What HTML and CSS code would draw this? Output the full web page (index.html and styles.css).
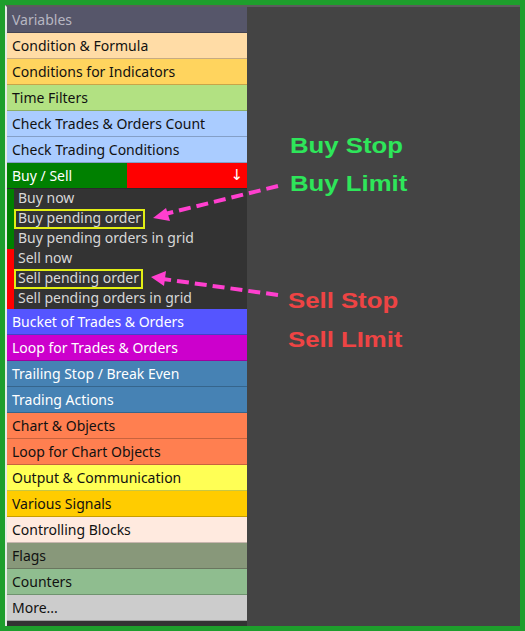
FILE: index.html
```html
<!DOCTYPE html>
<html lang="en">
<head>
  <meta charset="UTF-8">
  <meta name="viewport" content="width=device-width, initial-scale=1.0">
  <title>Blocks</title>
  <link rel="stylesheet" href="styles.css">
</head>
<body>
  <div class="window">
    <div class="panel">
      <div class="row variables">Variables</div>
      <div class="row peach">Condition &amp; Formula</div>
      <div class="row gold">Conditions for Indicators</div>
      <div class="row lime">Time Filters</div>
      <div class="row sky">Check Trades &amp; Orders Count</div>
      <div class="row sky">Check Trading Conditions</div>
      <div class="row buysell">
        <span>Buy / Sell</span>
        <span class="arrow">&#8595;</span>
      </div>
      <div class="submenu">
        <div class="item buy"><span>Buy now</span></div>
        <div class="item buy"><span class="marked">Buy pending order</span></div>
        <div class="item buy"><span>Buy pending orders in grid</span></div>
        <div class="item sell"><span>Sell now</span></div>
        <div class="item sell"><span class="marked">Sell pending order</span></div>
        <div class="item sell"><span>Sell pending orders in grid</span></div>
      </div>
      <div class="row blue">Bucket of Trades &amp; Orders</div>
      <div class="row magenta">Loop for Trades &amp; Orders</div>
      <div class="row steel">Trailing Stop / Break Even</div>
      <div class="row steel">Trading Actions</div>
      <div class="row coral">Chart &amp; Objects</div>
      <div class="row coral">Loop for Chart Objects</div>
      <div class="row yellow">Output &amp; Communication</div>
      <div class="row amber">Various Signals</div>
      <div class="row linen">Controlling Blocks</div>
      <div class="row olive">Flags</div>
      <div class="row sage">Counters</div>
      <div class="row grey">More...</div>
    </div>
  </div>

  <!-- notes drawn over the screenshot -->
  <svg class="overlay" width="525" height="631" viewBox="0 0 525 631">
    <g stroke="#ff3fcf" stroke-width="4" stroke-dasharray="12 6" fill="none">
      <line x1="278" y1="186" x2="165" y2="214"/>
      <line x1="278" y1="295" x2="163" y2="279"/>
    </g>
    <g fill="#ff3fcf">
      <polygon points="153,218 166,208 170,221"/>
      <polygon points="151,277 166,271 164,286"/>
    </g>
  </svg>
  <div class="note green" style="top:135px;left:290px">Buy Stop</div>
  <div class="note green" style="top:173px;left:290px">Buy Limit</div>
  <div class="note red" style="top:290px;left:288px">Sell Stop</div>
  <div class="note red" style="top:329px;left:288px">Sell LImit</div>
</body>
</html>
```

FILE: styles.css
```css
:root {
  --frame: #1e9e2c;
  --canvas: #444444;
  --panel: #333333;
  --pink: #ff3fcf;
}
body {
  margin: 0;
  width: 525px;
  height: 631px;
  position: relative;
  overflow: hidden;
  background-color: var(--frame);
  font-family: 'Noto Sans', 'Open Sans', sans-serif;
  font-size: 14px;
}
.window {
  margin: 5px 0 0 5px;
  width: 513px;
  height: 619px;
  border-top: 2px solid #5c5c5c;
  border-left: 2px solid #e4ece4;
  background-color: var(--canvas);
  display: flex;
}
.panel {
  width: 240px;
  height: 100%;
  background-color: var(--panel);
  display: flex;
  flex-direction: column;
}
.row {
  height: 25px;
  line-height: 25px;
  padding: 0 0 0 5px;
  flex-shrink: 0;
  border-bottom: 1px solid rgba(0, 0, 0, 0.22);
  color: #111111;
  white-space: nowrap;
}
.variables { background-color: #56566a; color: #b6b6c2; }
.peach { background-color: #ffdca6; }
.gold { background-color: #ffd45e; }
.lime { background-color: #b2e182; }
.sky { background-color: #aaccff; }
.blue { background-color: #5555ff; color: #ffffff; }
.magenta { background-color: #cc00cc; color: #ffffff; }
.steel { background-color: #4682b4; color: #ffffff; }
.coral { background-color: #ff7f50; }
.yellow { background-color: #ffff55; }
.amber { background-color: #ffcc00; }
.linen { background-color: #ffeadf; }
.olive { background-color: #88987a; }
.sage { background-color: #8fbd8f; }
.grey { background-color: #cccccc; }

.buysell {
  border-bottom: 1px solid #2a2a2a;
  padding: 0;
  display: grid;
  grid-template-columns: 120px 120px;
  color: #ffffff;
  background: linear-gradient(to right, #008000 120px, #ff0000 120px);
}
.buysell span {
  padding-left: 5px;
}
.buysell .arrow {
  text-align: right;
  padding-right: 4px;
  font-family: 'DejaVu Sans', sans-serif;
  font-size: 15px;
}
.submenu {
  display: flex;
  flex-direction: column;
  height: 120px;
  flex-shrink: 0;
}
.item {
  height: 20px;
  border-left: 7px solid #008000;
  color: #d8d8d8;
  white-space: nowrap;
}
.item.sell {
  border-left-color: #ff0000;
}
.item span {
  display: block;
  width: fit-content;
  height: 20px;
  box-sizing: border-box;
  border: 2px solid transparent;
  padding: 0 2px;
  line-height: 13px;
}
.item span.marked {
  border-color: #e2ef14;
}
.overlay {
  position: absolute;
  top: 0;
  left: 0;
  pointer-events: none;
}
.note {
  position: absolute;
  font-family: 'Liberation Sans', Arial, sans-serif;
  font-weight: bold;
  font-size: 22px;
  line-height: 22px;
  white-space: nowrap;
  transform: scaleX(1.17);
  transform-origin: left center;
}
.note.green { color: #2ee65a; }
.note.red { color: #ee4444; }
```
